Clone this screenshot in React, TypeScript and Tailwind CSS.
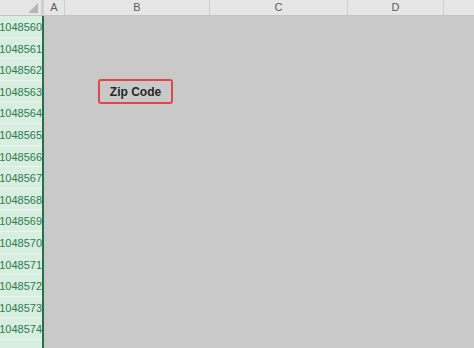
import React from "react";

const rows = [
  "1048560","1048561","1048562","1048563","1048564","1048565","1048566",
  "1048567","1048568","1048569","1048570","1048571","1048572","1048573","1048574",
];

export default function App() {
  return (
    <div
      className="w-[474px] h-[348px] overflow-hidden flex flex-col bg-[#c9c9c9]"
      style={{ fontFamily: '"Liberation Sans", Arial, sans-serif' }}
    >
      {/* column header */}
      <div className="flex h-[16px] shrink-0 bg-[#e6e6e6] border-b border-[#c4c4c4] text-[11px] text-[#5a5a5a] leading-[15px]">
        <div className="w-[42px] shrink-0 flex items-end justify-end pr-[3px] pb-[2px] border-r border-[#cfcfcf]">
          <svg width="10" height="10" viewBox="0 0 10 10">
            <polygon points="10,0 10,10 0,10" fill="#b5b5b5" />
          </svg>
        </div>
        <div className="w-[2px] shrink-0 bg-[#d0d0d0]" />
        <div className="w-[21px] shrink-0 flex justify-center border-r border-[#cfcfcf]">A</div>
        <div className="w-[145px] shrink-0 flex justify-center border-r border-[#cfcfcf]">B</div>
        <div className="w-[138px] shrink-0 flex justify-center border-r border-[#cfcfcf]">C</div>
        <div className="w-[96px] shrink-0 flex justify-center border-r border-[#cfcfcf]">D</div>
        <div className="flex-1" />
      </div>

      {/* body */}
      <div className="flex flex-1 min-h-0">
        <div className="w-[42px] shrink-0 bg-[#d7eee1] flex flex-col">
          {rows.map((r) => (
            <div
              key={r}
              className="h-[21.6px] shrink-0 flex items-center justify-end pt-[2px] border-b border-[#e9f5ee] text-[11px] text-[#2d7a4d]"
            >
              {r}
            </div>
          ))}
          <div className="flex-1" />
        </div>
        <div className="w-[2px] shrink-0 bg-[#217346]" />
        <div className="flex-1 flex flex-col">
          <div className="h-[64.8px] shrink-0" />
          <div className="h-[21.6px] shrink-0 flex items-center pl-[54px]">
            <div className="h-[25px] w-[75px] shrink-0 rounded-[3px] border-2 border-[#e0474c] flex items-center justify-center text-[12px] font-bold text-[#262626]">
              Zip Code
            </div>
          </div>
        </div>
      </div>
    </div>
  );
}
